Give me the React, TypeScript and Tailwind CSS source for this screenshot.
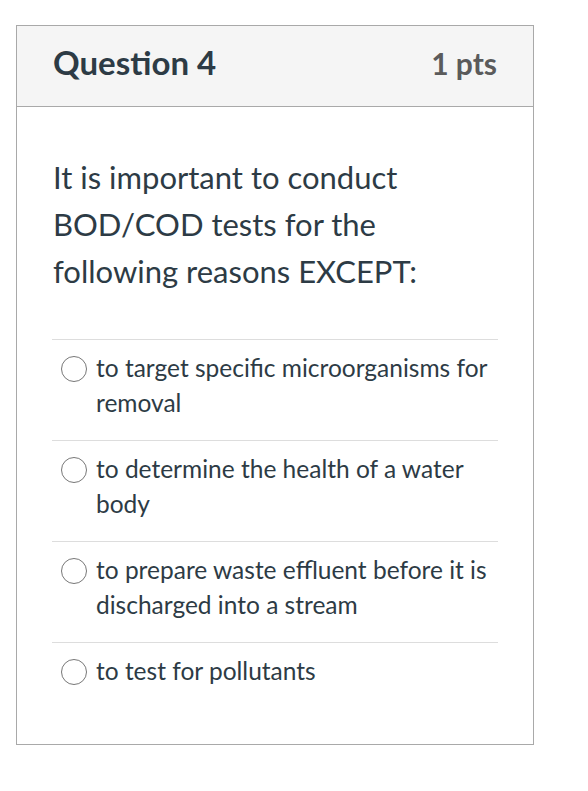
import React from "react";

const answers = [
  ["to target specific microorganisms for", "removal"],
  ["to determine the health of a water", "body"],
  ["to prepare waste effluent before it is", "discharged into a stream"],
  ["to test for pollutants"],
];

export default function App() {
  return (
    <div className="bg-white w-[588px] h-[791px] pt-[25px] pl-[16px]" style={{ fontFamily: "Lato, 'Noto Sans', sans-serif" }}>
      <div className="w-[518px] h-[720px] border border-[#a9a9a9] flex flex-col">
        <div className="h-[81px] bg-[#f5f5f5] border-b border-[#a9a9a9] flex items-center justify-between pl-[36px] pr-[36px] pb-[7px] shrink-0">
          <span className="text-[33px] font-bold text-[#2d3b45] leading-none">Question 4</span>
          <span className="text-[30px] font-bold text-[#5b5b5b] leading-none">1 pts</span>
        </div>
        <div className="px-[35px] pt-[47px]">
          <div className="text-[31px] leading-[47px] text-[#2d3b45] pl-[1px]">
            It is important to conduct
            <br />
            BOD/COD tests for the
            <br />
            following reasons EXCEPT:
          </div>
          <div className="mt-[44px]">
            {answers.map((a, i) => (
              <div key={i} className="border-t border-[#dddddd] pt-[10px] pb-[20px] flex items-start">
                <div className="w-[26px] h-[26px] rounded-full border-[1.5px] border-[#777] ml-[9px] mt-[6px] shrink-0" />
                <div className="ml-[9px] text-[24.5px] leading-[35px] text-[#2d3b45]">
                  {a.map((l, j) => (
                    <div key={j}>{l}</div>
                  ))}
                </div>
              </div>
            ))}
          </div>
        </div>
      </div>
    </div>
  );
}
